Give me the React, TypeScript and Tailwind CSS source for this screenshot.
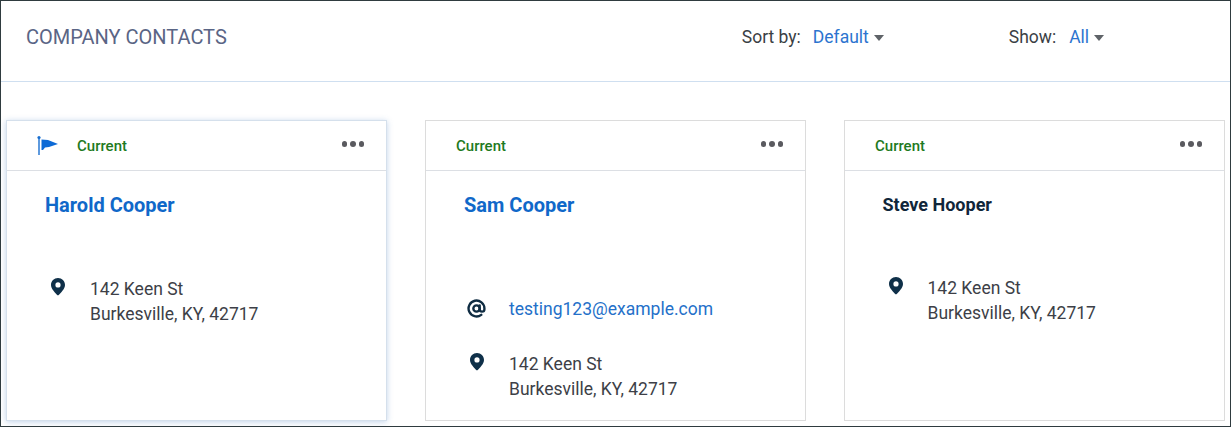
import { AtSign } from "lucide-react";

function Pin() {
    return (
        <svg width="14" height="18" viewBox="0 0 14 18" className="block">
            <path
                fillRule="evenodd"
                fill="#0f3049"
                d="M7 0C3.1 0 0 3 0 6.9 0 10.8 4.4 15 7 17.6 9.6 15 14 10.8 14 6.9 14 3 10.900 0 7 0ZM7 4.300A2.600 2.600 0 1 1 7 9.500 2.600 2.600 0 0 1 7 4.300Z"
            />
        </svg>
    );
}

function Flag() {
    return (
        <svg width="22" height="20" viewBox="0 0 22 20" className="block">
            <circle cx="2" cy="2.500" r="1.600" fill="#1a6fd0" />
            <rect x="1.300" y="3" width="1.400" height="17" fill="#1a6fd0" />
            <path d="M4.500 4.500L11 5 21 9 12 12 8 12.500 6 15 4.500 15Z" fill="#0d6ad6" />
        </svg>
    );
}

function Caret() {
    return <span className="ml-[5px] mt-[1px] w-0 h-0 border-x-[5.500px] border-x-transparent border-t-[6px] border-t-[#5f6368]" />;
}

function Dots() {
    return (
        <div className="flex gap-[3px]">
            <span className="w-[5.500px] h-[5.500px] rounded-full bg-[#5a5a5f]" />
            <span className="w-[5.500px] h-[5.500px] rounded-full bg-[#5a5a5f]" />
            <span className="w-[5.500px] h-[5.500px] rounded-full bg-[#5a5a5f]" />
        </div>
    );
}

function Address() {
    return (
        <div className="flex">
            <div className="w-[45px] pt-[1px] pl-[6px] shrink-0">
                <Pin />
            </div>
            <p className="leading-[25px] text-[#3d3f47]">
                142 Keen St
                <br />
                Burkesville, KY, 42717
            </p>
        </div>
    );
}

type Contact = {
    name: string;
    linked: boolean;
    flagged?: boolean;
    email?: string;
};

const contacts: Contact[] = [
    { name: "Harold Cooper", linked: true, flagged: true },
    { name: "Sam Cooper", linked: true, email: "testing123@example.com" },
    { name: "Steve Hooper", linked: false },
];

function ContactCard({ contact }: { contact: Contact }) {
    return (
        <div
            className={
                contact.flagged
                    ? "w-[381px] h-[301px] bg-white border border-[#d5e0ec] shadow-[0_1px_6px_rgba(120,160,210,0.45)]"
                    : "w-[381px] h-[301px] bg-white border border-[#dcdcdc]"
            }
        >
            <div className="flex items-center h-[50px] border-b border-[#dcdfe4] pl-[30px] pr-[22px]">
                {contact.flagged && (
                    <div className="w-[40px] shrink-0 -mt-[1px]">
                        <Flag />
                    </div>
                )}
                <span className="text-[15px] font-medium text-[#1e7a1e] mt-[1px]">Current</span>
                <div className="ml-auto -mt-[3px]">
                    <Dots />
                </div>
            </div>
            <div className={contact.linked ? "pl-[38px] pt-[20px]" : "pl-[37.500px] pt-[20px]"}>
                <h3
                    className={
                        contact.linked
                            ? "text-[20px] leading-[28px] font-bold text-[#1068c9]"
                            : "text-[18px] leading-[28px] font-bold text-[#10263a]"
                    }
                >
                    {contact.name}
                </h3>
                <div className={contact.email ? "mt-[77px]" : contact.linked ? "mt-[58px]" : "mt-[57px]"}>
                    {contact.email && (
                        <div className="flex mb-[30px] items-center h-[26px]">
                            <span className="w-[45px] pl-[3px] shrink-0 -mt-[2px]">
                                <AtSign size={19} strokeWidth={3} color="#0f2c42" />
                            </span>
                            <span className="text-[#2470c9]">{contact.email}</span>
                        </div>
                    )}
                    <Address />
                </div>
            </div>
        </div>
    );
}

export default function App() {
    return (
        <div className="w-[1231px] h-[427px] bg-white border border-[#2f3b3f] overflow-hidden font-['Roboto',sans-serif] text-[17.500px]">
            <header className="flex items-center h-[81px] border-b border-[#cfdff0] pb-[9px]">
                <h1 className="ml-[25px] text-[20px] text-[#5a6585]">COMPANY CONTACTS</h1>
                <div className="flex items-center ml-[515px] w-[267px] mt-[1px]">
                    <span className="text-[#3b3f45]">Sort by:</span>
                    <span className="ml-[12px] text-[#2c74cf]">Default</span>
                    <Caret />
                </div>
                <div className="flex items-center mt-[1px]">
                    <span className="text-[#3b3f45]">Show:</span>
                    <span className="ml-[13px] text-[#2c74cf]">All</span>
                    <Caret />
                </div>
            </header>
            <main className="flex gap-[38px] pl-[5px] pt-[38px]">
                {contacts.map((c) => (
                    <ContactCard key={c.name} contact={c} />
                ))}
            </main>
        </div>
    );
}
